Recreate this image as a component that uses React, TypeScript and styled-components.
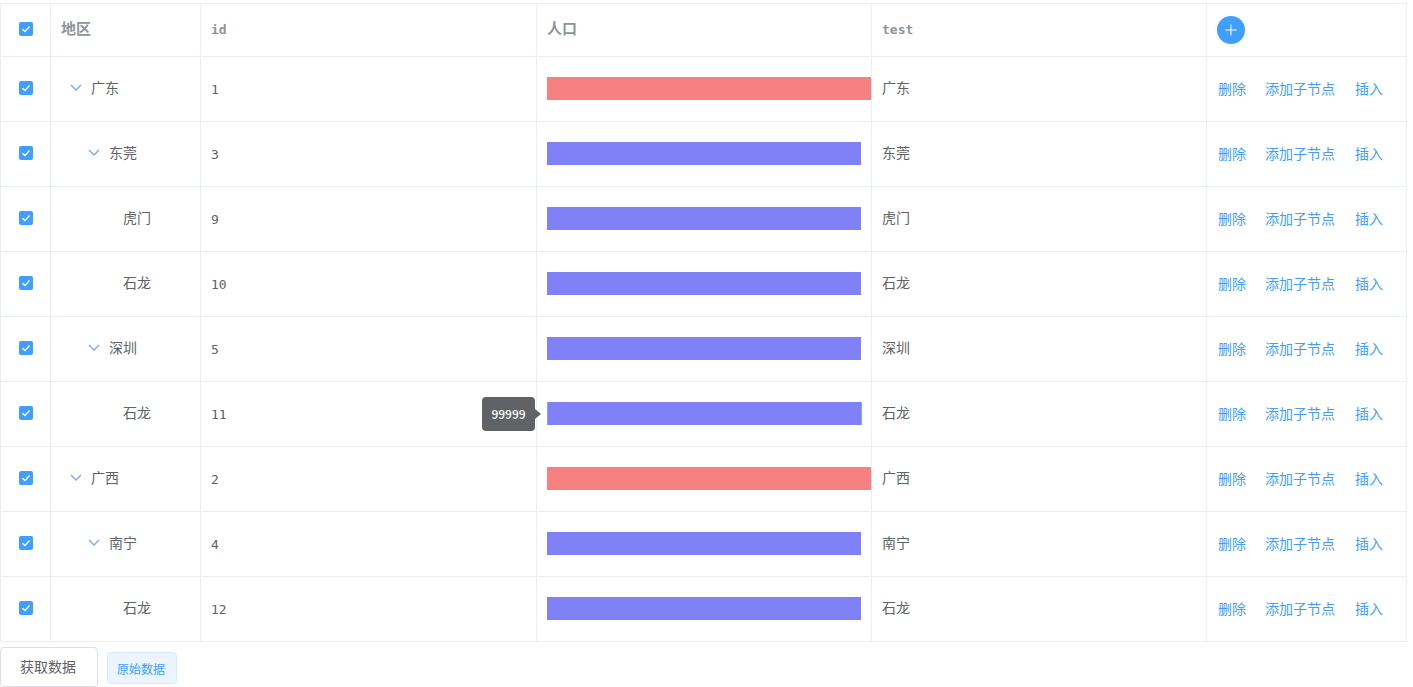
import React from "react"
import styled, { createGlobalStyle } from "styled-components"

const GlobalStyle = createGlobalStyle`
  html, body {
    margin: 0;
    padding: 0;
    background: #fff;
  }
  body {
    font-family: "Noto Sans CJK SC", "Liberation Sans", sans-serif;
    color: #606266;
    overflow: hidden;
  }
`

const Page = styled.div`
  width: 1407px;
  padding-top: 3px;
`

const Table = styled.table`
  width: 1407px;
  border-collapse: separate;
  border-spacing: 0;
  table-layout: fixed;
  border-top: 1px solid #ebeef5;
  border-left: 1px solid #ebeef5;
`

// $lift is the bottom padding, it nudges the centred content up
const HeadCell = styled.th<{ $lift: number }>`
  height: 53px;
  padding: 0 10px ${props => props.$lift}px;
  box-sizing: border-box;
  border-right: 1px solid #ebeef5;
  border-bottom: 1px solid #ebeef5;
  text-align: left;
  font-size: 15px;
  font-weight: 700;
  color: #909399;
`

const Cell = styled.td<{ $lift: number }>`
  height: 65px;
  box-sizing: border-box;
  padding: 0 10px ${props => props.$lift}px;
  border-right: 1px solid #ebeef5;
  border-bottom: 1px solid #ebeef5;
  font-size: 14px;
  color: #606266;
`

const Mono = styled.span`
  font-family: "DejaVu Sans Mono", monospace;
  font-size: 13px;
`

const CheckBox = styled.span`
  display: block;
  width: 14px;
  height: 14px;
  margin: 0 auto;
  border-radius: 2px;
  background: #409eff;
  color: #fff;
`

const CheckMark = styled.svg`
  display: block;
  width: 14px;
  height: 14px;
`

const Region = styled.div<{ $indent: number }>`
  display: flex;
  align-items: center;
  gap: 9px;
  padding-left: ${props => props.$indent}px;
`

const Chevron = styled.svg`
  width: 12px;
  height: 12px;
  flex: none;
`

const BarWrap = styled.div`
  position: relative;
`

const Bar = styled.div<{ $top: boolean; $active?: boolean }>`
  height: 23px;
  margin-right: ${props => (props.$top ? "-10px" : "0")};
  background: ${props => (props.$top ? "#f78080" : "#8080f7")};
  ${props => props.$active && `
    border-left: 1px solid #7fa6ff;
    border-right: 1px solid #7fa6ff;
    margin-right: -1px;
  `}
`

const Tip = styled.div`
  position: absolute;
  left: -65px;
  top: -5px;
  width: 53px;
  height: 34px;
  display: flex;
  align-items: center;
  justify-content: center;
  border-radius: 4px;
  background: #606266;
  color: #fff;
  font-size: 12px;
  font-weight: 500;
  &::after {
    content: "";
    position: absolute;
    right: -6px;
    top: 12px;
    border-left: 6px solid #606266;
    border-top: 5px solid transparent;
    border-bottom: 5px solid transparent;
  }
`

const AddButton = styled.span`
  display: flex;
  align-items: center;
  justify-content: center;
  width: 28px;
  height: 28px;
  border-radius: 50%;
  background: #409eff;
`

const Actions = styled.div`
  display: flex;
  gap: 20px;
  margin-left: 1px;
`

const ActionLink = styled.span`
  color: #409eff;
  font-size: 14px;
  &:first-child {
    margin-right: -1px;
  }
`

const Footer = styled.div`
  display: flex;
  align-items: flex-start;
  gap: 9px;
  padding-top: 5px;
`

const Button = styled.button`
  width: 98px;
  height: 40px;
  padding: 0 2px 2px 0;
  box-sizing: border-box;
  border: 1px solid #dcdfe6;
  border-radius: 4px;
  background: #fff;
  color: #606266;
  font: inherit;
  font-size: 14px;
`

const Tag = styled.span`
  display: flex;
  align-items: center;
  justify-content: center;
  width: 70px;
  height: 32px;
  margin-top: 5px;
  padding-right: 2px;
  box-sizing: border-box;
  border: 1px solid #d9ecff;
  border-radius: 4px;
  background: #ecf5ff;
  color: #409eff;
  font-size: 12px;
`

type Row = { name: string; id: number; level: number; open: boolean; top: boolean; tip?: boolean }

const rows: Row[] = [
  { name: "广东", id: 1, level: 1, open: true, top: true },
  { name: "东莞", id: 3, level: 2, open: true, top: false },
  { name: "虎门", id: 9, level: 3, open: false, top: false },
  { name: "石龙", id: 10, level: 3, open: false, top: false },
  { name: "深圳", id: 5, level: 2, open: true, top: false },
  { name: "石龙", id: 11, level: 3, open: false, top: false, tip: true },
  { name: "广西", id: 2, level: 1, open: true, top: true },
  { name: "南宁", id: 4, level: 2, open: true, top: false },
  { name: "石龙", id: 12, level: 3, open: false, top: false },
]

const indentFor = (level: number) => (level === 1 ? 9 : level === 2 ? 27 : 62)

const Check = () => (
  <CheckBox>
    <CheckMark viewBox="0 0 14 14" fill="none" stroke="currentColor" strokeWidth="1.4">
      <path d="M3.5 7.2 L6 9.6 L10.5 4.5" />
    </CheckMark>
  </CheckBox>
)

export default function App() {
  return (
    <Page>
      <GlobalStyle />
      <Table>
        <colgroup>
          <col style={{ width: 50 }} />
          <col style={{ width: 150 }} />
          <col style={{ width: 336 }} />
          <col style={{ width: 335 }} />
          <col style={{ width: 335 }} />
          <col />
        </colgroup>
        <thead>
          <tr>
            <HeadCell $lift={2}><Check /></HeadCell>
            <HeadCell $lift={6}>地区</HeadCell>
            <HeadCell $lift={6}><Mono>id</Mono></HeadCell>
            <HeadCell $lift={6}>人口</HeadCell>
            <HeadCell $lift={6}><Mono>test</Mono></HeadCell>
            <HeadCell $lift={0}>
              <AddButton>
                <svg width="12" height="12" viewBox="0 0 12 12" stroke="#fff" strokeWidth="1">
                  <path d="M6 0.5V11.5M0.5 6H11.5" />
                </svg>
              </AddButton>
            </HeadCell>
          </tr>
        </thead>
        <tbody>
          {rows.map(row => (
            <tr key={row.id}>
              <Cell $lift={2}><Check /></Cell>
              <Cell $lift={4}>
                <Region $indent={indentFor(row.level)}>
                  {row.open && (
                    <Chevron viewBox="0 0 12 12" fill="none" stroke="#78a8fa" strokeWidth="1.3">
                      <path d="M1 4 L6 9 L11 4" />
                    </Chevron>
                  )}
                  {row.name}
                </Region>
              </Cell>
              <Cell $lift={2}><Mono>{row.id}</Mono></Cell>
              <Cell $lift={2}>
                <BarWrap>
                  {row.tip && <Tip>99999</Tip>}
                  <Bar $top={row.top} $active={row.tip} />
                </BarWrap>
              </Cell>
              <Cell $lift={4}>{row.name}</Cell>
              <Cell $lift={2}>
                <Actions>
                  <ActionLink>删除</ActionLink>
                  <ActionLink>添加子节点</ActionLink>
                  <ActionLink>插入</ActionLink>
                </Actions>
              </Cell>
            </tr>
          ))}
        </tbody>
      </Table>
      <Footer>
        <Button>获取数据</Button>
        <Tag>原始数据</Tag>
      </Footer>
    </Page>
  )
}
